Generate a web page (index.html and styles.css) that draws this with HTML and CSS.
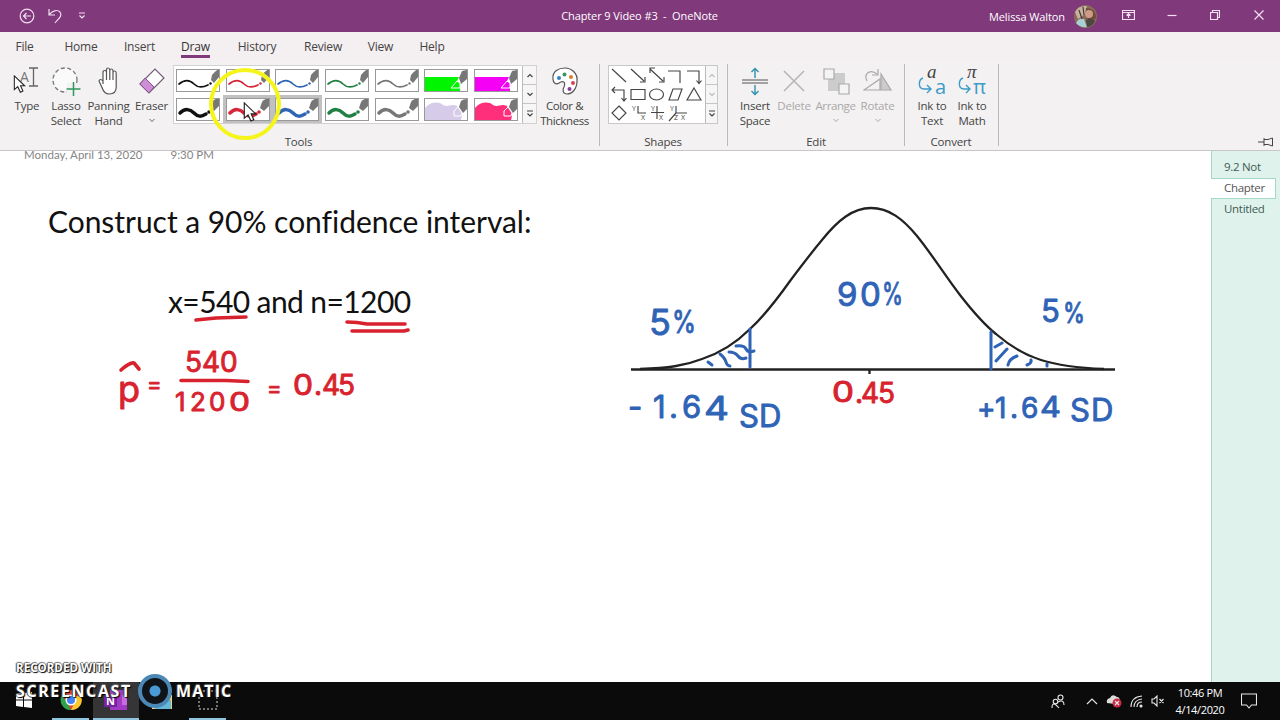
FILE: index.html
```
<!DOCTYPE html>
<html lang="en">
<head>
  <meta charset="UTF-8" />
  <meta name="viewport" content="width=device-width, initial-scale=1.0"/>
  <title>Chapter 9 Video #3 - OneNote</title>
  <link rel="stylesheet" href="styles.css">
</head>
<body>

<!-- Shared pen thumbnails -->
<svg class="defs" width="0" height="0">
  <symbol id="pen-thin" viewBox="0 0 42 21">
    <path d="M2 14 C8 9 13 10 17 14 S25 18 31 15" fill="none" stroke="currentColor" stroke-width="1.7" stroke-linecap="round"/>
    <circle cx="33.500" cy="13.500" r="1.200" fill="currentColor"/>
    <path d="M34 10 L35 5 Q38 1 42 -1 V7 L37 13Z" fill="#777"/>
  </symbol>
  <symbol id="pen-thick" viewBox="0 0 42 21">
    <path d="M3 14 C8 9 13 10 17 14 S24 18 29 15" fill="none" stroke="currentColor" stroke-width="3.500" stroke-linecap="round"/>
    <circle cx="32" cy="13" r="1.800" fill="currentColor"/>
    <path d="M33 9 L35 3 Q37 0 42 -1 V7 L37 12Z" fill="#777"/>
  </symbol>
  <symbol id="marker" viewBox="0 0 42 21">
    <path d="M0 7 H34 L31 13 26 18 H35 V21 H0Z" fill="currentColor"/>
    <path d="M26 18 L32 11 35 13 V18Z" fill="currentColor" stroke="#fff" stroke-width="1"/>
    <path d="M34 8 L37 1 42 0 V9 L36 14Z" fill="#777"/>
  </symbol>
  <symbol id="brush" viewBox="0 0 42 21">
    <path d="M0 9 C5 3 13 2 18 6 C23 9 26 4 32 7 L37 17 36 21 H0Z" fill="currentColor"/>
    <path d="M29 17 V12 L33 8 37 14 36 17Z" fill="currentColor" stroke="#fff" stroke-width="1"/>
    <path d="M34 8 L36 2 Q38 0 42 0 V10 L38 14Z" fill="#777"/>
  </symbol>
  <symbol id="pointer" viewBox="0 0 14 22">
    <path d="M1 1 V17 L5 13.500 8 20 11 18.500 8.200 12.500 H13Z" fill="#fff" stroke="#222" stroke-width="1.200"/>
  </symbol>
</svg>

<div class="window">
  <header class="titlebar">
    <div class="quick">
      <svg width="16" height="16" viewBox="0 0 16 16"><circle cx="8" cy="8" r="6.800"/><path d="M12 8H4.500M7.500 5l-3 3 3 3"/></svg>
      <svg width="15" height="16" viewBox="0 0 15 16"><path d="M1 1v6h6M1.500 6.500C4 3 9 1 12 4c3 4-2 7-5 11"/></svg>
      <svg width="8" height="8" viewBox="0 0 8 8"><path d="M1 1h6M1.500 3.500L4 6l2.500-2.500"/></svg>
    </div>
    <div class="doc-title">Chapter 9 Video #3&nbsp; -&nbsp; OneNote</div>
    <div class="account">
      <span>Melissa Walton</span>
      <svg class="avatar" width="23" height="23" viewBox="0 0 23 23">
        <circle cx="11.500" cy="11.500" r="11.500" fill="#8a6a58"/>
        <path d="M1 7Q5 0 13 1L11 9 4 14Z" fill="#c7b39f"/>
        <path d="M12 3Q22 3 22 13L16 17 11 11Z" fill="#704b3e"/>
        <circle cx="15" cy="9" r="4" fill="#cf9b86"/>
        <path d="M2 18Q5 12 10 14L13 22Q6 23 2 18Z" fill="#a7d0d5"/>
        <path d="M12 15Q18 12 21 16 18 22 13 22Z" fill="#4b463f"/>
        <path d="M5 5l3 9M9 2l1 8" stroke="#493a39"/>
      </svg>
    </div>
    <div class="controls">
      <svg width="13" height="10" viewBox="0 0 13 10"><path d="M.5.500h12v9H.5zM.5 2.500h12M6.500 8V4M4.500 5.500l2-2 2 2"/></svg>
      <svg width="10" height="10" viewBox="0 0 10 10"><path d="M.5 5.500h9"/></svg>
      <svg width="10" height="10" viewBox="0 0 10 10"><path d="M.5 2.500h7v7h-7zM2.500 2V.5h7v7H8"/></svg>
      <svg width="10" height="10" viewBox="0 0 10 10"><path d="M.5.500l9 9M9.500.500l-9 9"/></svg>
    </div>
  </header>

  <nav class="tabs">
    <a>File</a><a>Home</a><a>Insert</a><a class="active">Draw</a><a>History</a><a>Review</a><a>View</a><a>Help</a>
  </nav>

  <section class="ribbon">
    <div class="group tools">
      <div class="items">
        <div class="tool type">
          <svg width="30" height="30" viewBox="0 0 30 30">
            <text x="8" y="16" class="type-a">A</text>
            <path d="M17 2h9M17 20h9M21.500 2v18" stroke="#666" stroke-width="1.300"/>
            <use href="#pointer" x="1" y="9" width="13" height="19"/>
          </svg>
          <span>Type</span>
        </div>
        <div class="tool lasso">
          <svg width="30" height="30" viewBox="0 0 30 30">
            <circle cx="14" cy="14" r="12" fill="#fafafa" stroke="#777" stroke-width="1.300" stroke-dasharray="4 2.500"/>
            <path d="M16 17h14v13H16z" fill="#f3f1f1"/>
            <path d="M22.500 16v14M15.500 23h14" stroke="#31985b" stroke-width="1.500"/>
          </svg>
          <span>Lasso<br>Select</span>
        </div>
        <div class="tool panning">
          <svg width="24" height="30" viewBox="0 0 24 30">
            <path d="M6 18V6.500q0-2 1.800-2T9.500 6.500V14M9.500 12V4q0-2 1.500-2t1.800 2v10M12.800 5q0-2 1.600-2T16 5v9M16 7q0-2 1.600-2t1.600 2v14q0 7-7 7-5 0-7-6L2 15q1-3 4 0" fill="#fff" stroke="#555" stroke-width="1.200"/>
          </svg>
          <span>Panning<br>Hand</span>
        </div>
        <div class="tool eraser">
          <svg width="28" height="30" viewBox="0 0 28 30">
            <path d="M2 18L17 3l9 9-15 15z" fill="#fff" stroke="#735c77" stroke-width="1.200"/>
            <path d="M2 18l5-6 9 9-5 6z" fill="#ce8ed5" stroke="#85518a"/>
          </svg>
          <span>Eraser</span>
          <svg class="chev" width="6" height="5" viewBox="0 0 6 5"><path d="M.5 1L3 3.500 5.500 1"/></svg>
        </div>

        <div class="gallery">
          <div class="pens">
            <div class="pen black"><svg><use href="#pen-thin"/></svg></div>
            <div class="pen red"><svg><use href="#pen-thin"/></svg></div>
            <div class="pen blue"><svg><use href="#pen-thin"/></svg></div>
            <div class="pen green"><svg><use href="#pen-thin"/></svg></div>
            <div class="pen gray"><svg><use href="#pen-thin"/></svg></div>
            <div class="pen lime"><svg><use href="#marker"/></svg></div>
            <div class="pen magenta"><svg><use href="#marker"/></svg></div>
            <div class="pen black"><svg><use href="#pen-thick"/></svg></div>
            <div class="pen red selected"><svg><use href="#pen-thick"/></svg></div>
            <div class="pen blue selected"><svg><use href="#pen-thick"/></svg></div>
            <div class="pen green"><svg><use href="#pen-thick"/></svg></div>
            <div class="pen gray"><svg><use href="#pen-thick"/></svg></div>
            <div class="pen lilac"><svg><use href="#brush"/></svg></div>
            <div class="pen pink"><svg><use href="#brush"/></svg></div>
          </div>
          <div class="scroller">
            <div><svg width="6" height="5" viewBox="0 0 6 5"><path d="M.5 4L3 1.500 5.500 4"/></svg></div>
            <div><svg width="6" height="5" viewBox="0 0 6 5"><path d="M.5 1L3 3.500 5.500 1"/></svg></div>
            <div><svg width="6" height="7" viewBox="0 0 6 7"><path d="M0 1h6M.5 3.500L3 6l2.500-2.500"/></svg></div>
          </div>
        </div>

        <div class="tool palette">
          <svg width="28" height="30" viewBox="0 0 28 30">
            <path d="M2 13C1 5 8 2 14 2s13 5 12 13c0 8-5 13-10 13-4 0-5-4-3-7 2-5-1-7-5-4-3 2-6 0-6-4z" fill="#fff" stroke="#555" stroke-width="1.200"/>
            <circle cx="8" cy="12" r="2" fill="#3084c7"/><circle cx="13.500" cy="8.500" r="2" fill="#369467"/><circle cx="20" cy="11" r="2" fill="#dc7b2c"/><circle cx="22" cy="17" r="2" fill="#d9454f"/><circle cx="18.500" cy="23" r="2" fill="#853ea0"/>
          </svg>
          <span>Color &amp;<br>Thickness</span>
        </div>
      </div>
      <div class="label">Tools</div>
    </div>

    <div class="group shapes">
      <div class="items">
        <div class="shape-box">
          <svg width="96" height="56" viewBox="0 0 96 56" fill="none" stroke="#444" stroke-width="1.150">
            <path d="M3 3l14 13"/>
            <path d="M22 3l13 12M36 11v5h-5"/>
            <path d="M41 3l13 12M41 7V2h5M55 11v5h-5"/>
            <path d="M59 5h12v12"/>
            <path d="M78 5h12v12M87.500 14.500l2.500 3 2.500-3"/>
            <path d="M4 24h11v11M6 21l-3 3 3 3M12.500 32l2.500 3 2.500-3"/>
            <path d="M22 23.500h14v10H22z"/>
            <ellipse cx="47.500" cy="28.500" rx="7" ry="5.500"/>
            <path d="M64 23h9l-4 11h-9z"/>
            <path d="M85 22l7 12H78z"/>
            <path d="M10 40l7 7-7 7-7-7z"/>
            <path d="M29 40v7h8M48 40v13M42 46.500h13M67 40v7h11M67 47l-7 8"/>
            <g class="axis"><text x="23" y="45">Y</text><text x="32" y="54">X</text><text x="42" y="45">Y</text><text x="50" y="54">X</text><text x="61" y="45">Y</text><text x="65" y="54">Z</text><text x="72" y="54">X</text></g>
          </svg>
          <div class="scroller">
            <div class="off"><svg width="6" height="5" viewBox="0 0 6 5"><path d="M.5 4L3 1.500 5.500 4"/></svg></div>
            <div class="off"><svg width="6" height="5" viewBox="0 0 6 5"><path d="M.5 1L3 3.500 5.500 1"/></svg></div>
            <div><svg width="6" height="7" viewBox="0 0 6 7"><path d="M0 1h6M.5 3.500L3 6l2.500-2.500"/></svg></div>
          </div>
        </div>
      </div>
      <div class="label">Shapes</div>
    </div>

    <div class="group edit">
      <div class="items">
        <div class="tool">
          <svg width="28" height="30" viewBox="0 0 28 30"><path d="M1 14h26M1 17h26" stroke="#555" stroke-width="1.200"/><path d="M14 12V3M10.500 6L14 2.500 17.500 6M14 19v9M10.500 25l3.500 3.500 3.500-3.500" fill="none" stroke="#318fae" stroke-width="1.400"/></svg>
          <span>Insert<br>Space</span>
        </div>
        <div class="tool off">
          <svg width="28" height="30" viewBox="0 0 28 30"><path d="M4 5l20 20M24 5L4 25" stroke="#b5b3b3" stroke-width="1.500"/></svg>
          <span>Delete</span>
        </div>
        <div class="tool off">
          <svg width="28" height="30" viewBox="0 0 28 30" fill="#f5f4f4" stroke="#aaa" stroke-width="1.200"><path d="M6 7h17v18H6z" fill="#ccc" stroke="none"/><path d="M2 3h10v10H2zM17 18h10v10H17z"/></svg>
          <span>Arrange</span>
          <svg class="chev" width="6" height="5" viewBox="0 0 6 5"><path d="M.5 1L3 3.500 5.500 1"/></svg>
        </div>
        <div class="tool off">
          <svg width="30" height="30" viewBox="0 0 30 30" fill="none" stroke="#aaa" stroke-width="1.200"><path d="M1 24h16V13z"/><path d="M18 24V8l10 16z" fill="#ccc"/><path d="M4 15C0 7 8 3 14 8M15 3v6H9"/></svg>
          <span>Rotate</span>
          <svg class="chev" width="6" height="5" viewBox="0 0 6 5"><path d="M.5 1L3 3.500 5.500 1"/></svg>
        </div>
      </div>
      <div class="label">Edit</div>
    </div>

    <div class="group convert">
      <div class="items">
        <div class="tool">
          <svg width="30" height="30" viewBox="0 0 30 30"><text class="script-glyph" x="10" y="12">a</text><text class="print-glyph" x="18" y="28">a</text><path class="turn" d="M6 12C1 14 1 23 7 23h6M10 19l4 4-4 4"/></svg>
          <span>Ink to<br>Text</span>
        </div>
        <div class="tool">
          <svg width="30" height="30" viewBox="0 0 30 30"><text class="script-glyph" x="10" y="12">π</text><text class="print-glyph" x="16" y="28">π</text><path class="turn" d="M6 12C1 14 1 23 7 23h5M9 19l4 4-4 4"/></svg>
          <span>Ink to<br>Math</span>
        </div>
      </div>
      <div class="label">Convert</div>
    </div>
    <svg class="pin" width="16" height="10" viewBox="0 0 16 10"><path d="M0 5h6M6 1v8M6 2.500h4l4.500-1.500v8L10 7.500H6"/></svg>
  </section>

  <main class="workspace">
    <div class="page">
      <div class="stamp"><span>Monday, April 13, 2020</span><span>9:30 PM</span></div>
      <p class="note question">Construct a 90% confidence interval:</p>
      <p class="note given">x=540 and n=1200</p>

      <!-- Ink layer, in window coordinates -->
      <svg class="ink" width="1211" height="531" viewBox="0 151 1211 531">
        <g class="curve">
          <path d="M631 369.500H1115M869.500 370v4"/>
          <path d="M640 369C668 368 684 366 702 359C720 353 736 343 750 329C766 314 778 298 790 281C802 265 812 252 822 240C838 220 853 208 871 208C889 208 903 219 917 236C931 253 946 277 960 295C974 313 986 326 996 334C1010 346 1025 355 1041 360C1060 366 1080 368 1104 369"/>
        </g>
        <g class="ink-blue">
          <path d="M750 329v38M991 332v37"/>
          <path d="M736 346q8-1 10 3t8 2M729 352q6 0 9 4t8 2M720 354q5 4 6 8t4 4M708 362l4 3"/>
          <path d="M995 347l7-4M996 361l11-12M1008 365q1-6 9-9M1027 365q5-2 4-5M1047 366v-2"/>
          <text class="t36" x="649" y="335">5</text><text class="t31" x="672" y="333" textLength="24" lengthAdjust="spacingAndGlyphs">%</text>
          <text class="t33" x="837 860" y="306">90</text><text class="t31" x="882" y="305" textLength="21" lengthAdjust="spacingAndGlyphs">%</text>
          <text class="t31" x="1041" y="322">5</text><text class="t28" x="1063" y="323" textLength="22" lengthAdjust="spacingAndGlyphs">%</text>
          <text class="t31" x="628 653 669 682" y="418">-1.6</text><text class="t33" x="704" y="420" textLength="25" lengthAdjust="spacingAndGlyphs">4</text>
          <text class="t31" x="739 759" y="427">SD</text>
          <text class="t28" x="977 995 1010 1021" y="418">+1.6</text><text class="t28" x="1040" y="417" textLength="21" lengthAdjust="spacingAndGlyphs">4</text>
          <text class="t31" x="1070 1091" y="421">SD</text>
        </g>
        <g class="ink-red">
          <path d="M196 320l20-2 30-1M347 322q10 0 20 2h38M352 331h52l4-1"/>
          <path d="M181 380.500l45 0 22 1"/>
          <path d="M121 370q9-8 13-7l5 6"/>
          <text class="t36" x="118" y="402">p</text>
          <text class="t22" x="147" y="392">=</text>
          <text class="t22" x="267" y="396">=</text>
          <text class="t28" x="185 202 220" y="372">540</text>
          <text class="t26" x="175 190 209" y="411">120</text><text class="t26" x="229" y="411" textLength="21" lengthAdjust="spacingAndGlyphs">0</text>
          <text class="t28" x="293" y="395" textLength="20" lengthAdjust="spacingAndGlyphs">0</text><text class="t28" x="314 322 338" y="395">.45</text>
          <text class="t28" x="832" y="402" textLength="22" lengthAdjust="spacingAndGlyphs">0</text><text class="t28" x="855 861 878" y="403">.45</text>
        </g>
      </svg>
    </div>
    <aside class="page-list">
      <div>9.2 Not</div>
      <div class="current">Chapter</div>
      <div>Untitled</div>
    </aside>
  </main>

  <footer class="taskbar">
    <div class="apps">
      <div class="app start"><svg width="16" height="16" viewBox="0 0 16 16"><path d="M0 2l7-1v6.500H0zM8 1l8-1v7.500H8zM0 8.500h7V15l-7-1zM8 8.500h8V16l-8-1z" fill="#fff"/></svg></div>
      <div class="app running">
        <svg width="22" height="22" viewBox="0 0 22 22"><circle cx="11" cy="11" r="10" fill="#e84435"/><path d="M2 6l6 9 3 6A10 10 0 0 1 2 6z" fill="#2ca24c"/><path d="M11 21l5-10-1-4h6a10 10 0 0 1-10 14z" fill="#fbc92f"/><circle cx="11" cy="11" r="4.800" fill="#4285f4" stroke="#fff" stroke-width="1.500"/></svg>
      </div>
      <div class="app running open">
        <svg width="24" height="22" viewBox="0 0 24 22"><path d="M6 1h17v20H6z" fill="#a23bc4"/><path d="M18 6h5v5h-5zM18 11h5v5h-5z" fill="#c76be0"/><path d="M0 5h13v13H0z" fill="#7722a0"/><text x="2" y="16" class="n">N</text></svg>
      </div>
      <div class="app">
        <svg width="22" height="20" viewBox="0 0 22 20"><path d="M1 2h8l2 3h10v14H1z" fill="#f4d373"/><path d="M4 10h16v9H4z" fill="#65b7dc"/></svg>
      </div>
      <div class="app running snip"><svg width="20" height="20" viewBox="0 0 20 20"><path d="M1 1h18v18H1z" fill="none" stroke="#ddd" stroke-dasharray="2 2"/></svg></div>
    </div>
    <div class="tray">
      <svg width="14" height="15" viewBox="0 0 14 15"><circle cx="9.500" cy="3.500" r="2.500"/><circle cx="4.500" cy="7.500" r="2.300"/><path d="M7 8q6-3 6 3M1 14q0-8 7 0"/></svg>
      <svg width="12" height="8" viewBox="0 0 12 8"><path d="M1 7l5-5 5 5"/></svg>
      <svg width="16" height="14" viewBox="0 0 16 14"><path d="M1 9Q0 5 4 4q2-5 7-1 3 0 3 5L9 10z" fill="#ddd" stroke="none"/><circle cx="11" cy="9" r="4.500" fill="#cc2942" stroke="none"/><path d="M9 7l4 4M13 7l-4 4"/></svg>
      <svg width="13" height="13" viewBox="0 0 13 13"><path d="M1 12Q1 2 12 1M4 12Q4 5 12 4M7 12q0-5 5-5"/><circle cx="11" cy="11" r="1" fill="#fff"/></svg>
      <svg width="14" height="12" viewBox="0 0 14 12"><path d="M1 4h2l3-3v10L3 8H1zM8.500 4l4 4M12.500 4l-4 4"/></svg>
      <div class="clock">10:46 PM<br>4/14/2020</div>
      <svg width="16" height="16" viewBox="0 0 16 16"><path d="M.5 1h15v11h-5L8 15l-2.500-3h-5z"/></svg>
    </div>
  </footer>
</div>

<!-- Click highlight and mouse pointer -->
<div class="halo"></div>
<svg class="mouse" width="14" height="21"><use href="#pointer"/></svg>

<!-- Recorder watermark -->
<div class="watermark">
  <div class="small">RECORDED WITH</div>
  <div class="brand"><span class="cast">SCREENCAST</span><i></i><span class="matic">MATIC</span></div>
</div>

</body>
</html>
```

FILE: styles.css
```
* { box-sizing: border-box; }
body { margin: 0; font-family: "Open Sans", "Noto Sans", sans-serif; font-size: 11.5px; color: #444; background: #fff; overflow: hidden; }
svg { display: block; flex: none; }
.defs { position: absolute; }
.window { width: 1280px; height: 720px; display: flex; flex-direction: column; }

/* Title bar */
.titlebar { height: 32px; background: #80397b; color: #fff; display: grid; grid-template-columns: 460px 359px 281px 180px; align-items: center; font-size: 11px; letter-spacing: -0.1px; }
.titlebar svg { fill: none; stroke: #f3dff1; stroke-width: 1.2; }
.quick { display: flex; align-items: center; gap: 13px; padding-left: 19px; }
.quick svg:last-child { margin-left: 2px; }
.doc-title { text-align: center; padding-bottom: 2px; white-space: nowrap; }
.account { display: flex; align-items: center; justify-content: flex-end; gap: 9px; padding-right: 3px; }
.titlebar .avatar { stroke: none; }
.controls { display: flex; align-items: center; padding-left: 22px; gap: 34px; padding-bottom: 2px; }
.controls svg:nth-child(1) { margin-right: -2px; }
.controls svg:nth-child(2) { margin-right: -1px; }

/* Tabs */
.tabs { height: 30px; background: #f4eff1; display: grid; grid-template-columns: 49px 64px 53px 59px 64px 68px 47px 56px; justify-items: center; font-size: 12px; letter-spacing: -0.2px; }
.tabs a { height: 26px; line-height: 29px; }
.tabs .active { border-bottom: 3px solid #80397b; color: #333; }

/* Ribbon */
.ribbon { height: 89px; background: #f3f1f1; display: flex; border-bottom: 1px solid #c8c6c6; padding-top: 2px; }
.group { display: flex; flex-direction: column; height: 82px; border-right: 1px solid #bbb9b9; }
.items { display: flex; flex: none; height: 71px; }
.label { text-align: center; line-height: 14px; letter-spacing: -0.2px; }
.tools { width: 600px; }
.tools .label { padding-right: 2px; }
.shapes { width: 128px; padding-left: 8px; }
.shapes .label { padding-right: 9px; }
.edit { width: 177px; padding-left: 7px; }
.edit .label { padding-right: 7px; }
.convert { width: 94px; padding-left: 7px; }
.convert .label { padding-right: 8px; }
.tool { width: 42px; display: flex; flex-direction: column; align-items: center; padding-top: 2px; text-align: center; line-height: 15px; letter-spacing: -0.2px; white-space: nowrap; }
.tool span { margin-top: 2px; }
.tool.off { color: #aaa8a8; }
.chev { margin-top: 5px; fill: none; stroke: #666; }
.off .chev { stroke: #aaa; }
.type { width: 38px; margin-left: 8px; }
.lasso { width: 40px; }
.panning { width: 45px; }
.eraser { width: 41px; }
.palette { width: 55px; letter-spacing: -0.4px; }
.edit .tool:nth-child(1) { width: 40px; }
.edit .tool:nth-child(2) { width: 38px; }
.edit .tool:nth-child(3) { width: 45px; letter-spacing: -0.4px; }
.edit .tool:nth-child(4) { width: 39px; }
.convert .tool { width: 40px; }
.convert svg { overflow: visible; }
.type-a { font: 14px "Open Sans", sans-serif; fill: #777; }
.script-glyph { font: italic 19px "Liberation Serif", serif; fill: #444; }
.print-glyph { font: 20px "Open Sans", sans-serif; fill: #3d9bc7; }
.turn { fill: none; stroke: #3d9bc7; stroke-width: 1.4; }

.gallery { width: 364px; height: 59px; margin: 1px 0 0 1px; display: flex; background: #fff; border: 1px solid #d3d1d1; }
.pens { width: 349px; display: grid; grid-template-columns: repeat(7, 49.7px); grid-template-rows: 29px 28px; margin-left: -1px; }
.pen { color: #111; display: flex; justify-content: center; align-items: center; }
.pen svg { width: 44px; height: 23px; background: #fff; border: 1px solid #999; }
.pen.selected { background: #c2c1c1; }
.black { color: #111; }
.red { color: #d6273a; }
.blue { color: #2f65b5; }
.green { color: #218044; }
.gray { color: #777; }
.lime { color: #00f500; }
.magenta { color: #f500f5; }
.lilac { color: #d7cbea; }
.pink { color: #ff2f7c; }
.scroller { width: 14px; display: grid; grid-template-rows: 19px 19px 19px; border-left: 1px solid #bbb; background: #f7f6f6; }
.scroller div { display: flex; align-items: center; justify-content: center; border-bottom: 1px solid #c6c4c4; }
.scroller div:last-child { border-bottom: 0; }
.scroller svg { fill: none; stroke: #444; stroke-width: 1.2; }
.scroller .off svg { stroke: #bbb; }
.shape-box { width: 110px; height: 59px; margin-top: 1px; display: flex; justify-content: space-between; background: #fff; border: 1px solid #c9c7c7; }
.axis text { font: 7px "Open Sans", sans-serif; fill: #444; stroke: none; }
.pin { margin: 73px 6px 0 auto; fill: none; stroke: #444; }

/* Page */
.workspace { height: 531px; display: flex; }
.page { width: 1211px; position: relative; overflow: hidden; background: #fff; }
.stamp { display: flex; gap: 28px; margin: -4px 0 0 24px; font: 11.5px/16px Lato, sans-serif; color: #858585; }
.note { margin: 0; color: #111; font-family: Lato, sans-serif; white-space: nowrap; }
.question { font-size: 30px; line-height: 40px; padding: 38px 0 0 48px; letter-spacing: -0.04px; }
.given { font-size: 30px; line-height: 40px; padding: 40px 0 0 168px; letter-spacing: -0.6px; }
.ink { position: absolute; left: 0; top: 0; }
.curve path { fill: none; stroke: #222; stroke-width: 2.3; }
.ink-blue path, .ink-red path { fill: none; stroke-width: 3.6; stroke-linecap: round; stroke-linejoin: round; }
.ink-blue path { stroke: #2f63b6; stroke-width: 3; }
.ink-red path { stroke: #d8232f; }
.ink text { font-family: Inter, sans-serif; font-weight: 400; stroke-width: 0.9; stroke-linejoin: round; }
.ink-blue text { fill: #2f63b6; stroke: #2f63b6; }
.ink-red text { fill: #d8232f; stroke: #d8232f; }
.t22 { font-size: 22px; }
.t26 { font-size: 26px; }
.t28 { font-size: 28px; }
.t31 { font-size: 31px; }
.t33 { font-size: 33px; }
.t36 { font-size: 36px; }

.page-list { width: 69px; background: #dff3ec; border-left: 1px solid #a4d8cb; padding-top: 6px; }
.page-list div { height: 21px; line-height: 20px; padding-left: 12px; color: #3f5a55; letter-spacing: -0.3px; }
.page-list .current { width: 65px; margin-left: -1px; padding-left: 13px; line-height: 18px; background: #fff; border: 1px solid #a4d8cb; border-left: 0; color: #555; }

/* Taskbar */
.taskbar { height: 38px; background: #0b0b0c; display: flex; justify-content: space-between; color: #fff; }
.apps { display: flex; }
.app { width: 46px; height: 38px; display: flex; align-items: center; justify-content: center; border-bottom: 2px solid transparent; }
.start { width: 47px; }
.running { border-color: #8fc5df; }
.app:nth-child(2) { width: 37px; margin: 0 4px 0 5px; }
.open { background: #353437; }
.snip { width: 37px; margin-left: 4px; }
.n { font: bold 11px "Open Sans", sans-serif; fill: #fff; }
.tray { display: flex; align-items: center; padding-right: 23px; }
.tray svg { fill: none; stroke: #e8e8e8; stroke-width: 1.1; margin-right: 8px; }
.tray svg:first-child { margin-right: 21px; }
.tray .clock { width: 50px; margin: 0 16px 0 2px; text-align: center; line-height: 17px; font-size: 11px; letter-spacing: -0.35px; white-space: nowrap; padding-bottom: 1px; }
.tray svg:last-child { margin-right: 0; }

/* Overlays */
.halo { position: absolute; left: 209px; top: 68px; width: 72px; height: 72px; border: 4px solid #f5f51c; border-radius: 50%; }
.mouse { position: absolute; left: 243px; top: 102px; }
.watermark { position: absolute; left: 16px; top: 660px; color: #fff; font-family: "Open Sans", sans-serif; font-weight: 700; text-shadow: 1px 1px 1px #000, -1px 0 1px #444, 0 -1px 1px #777; }
.small { font-size: 11.5px; line-height: 16px; letter-spacing: 0.05px; }
.brand { display: flex; align-items: center; height: 32px; margin-top: -1px; font-size: 16px; }
.cast { width: 116px; letter-spacing: 1.6px; }
.matic { letter-spacing: 1.1px; }
.brand i { width: 34px; height: 34px; margin: 0 4px 0 6px; border-radius: 50%; border: 4px solid #4c88b5; background: radial-gradient(circle, #4b9ad8 0 5px, #101418 6px); }
```
